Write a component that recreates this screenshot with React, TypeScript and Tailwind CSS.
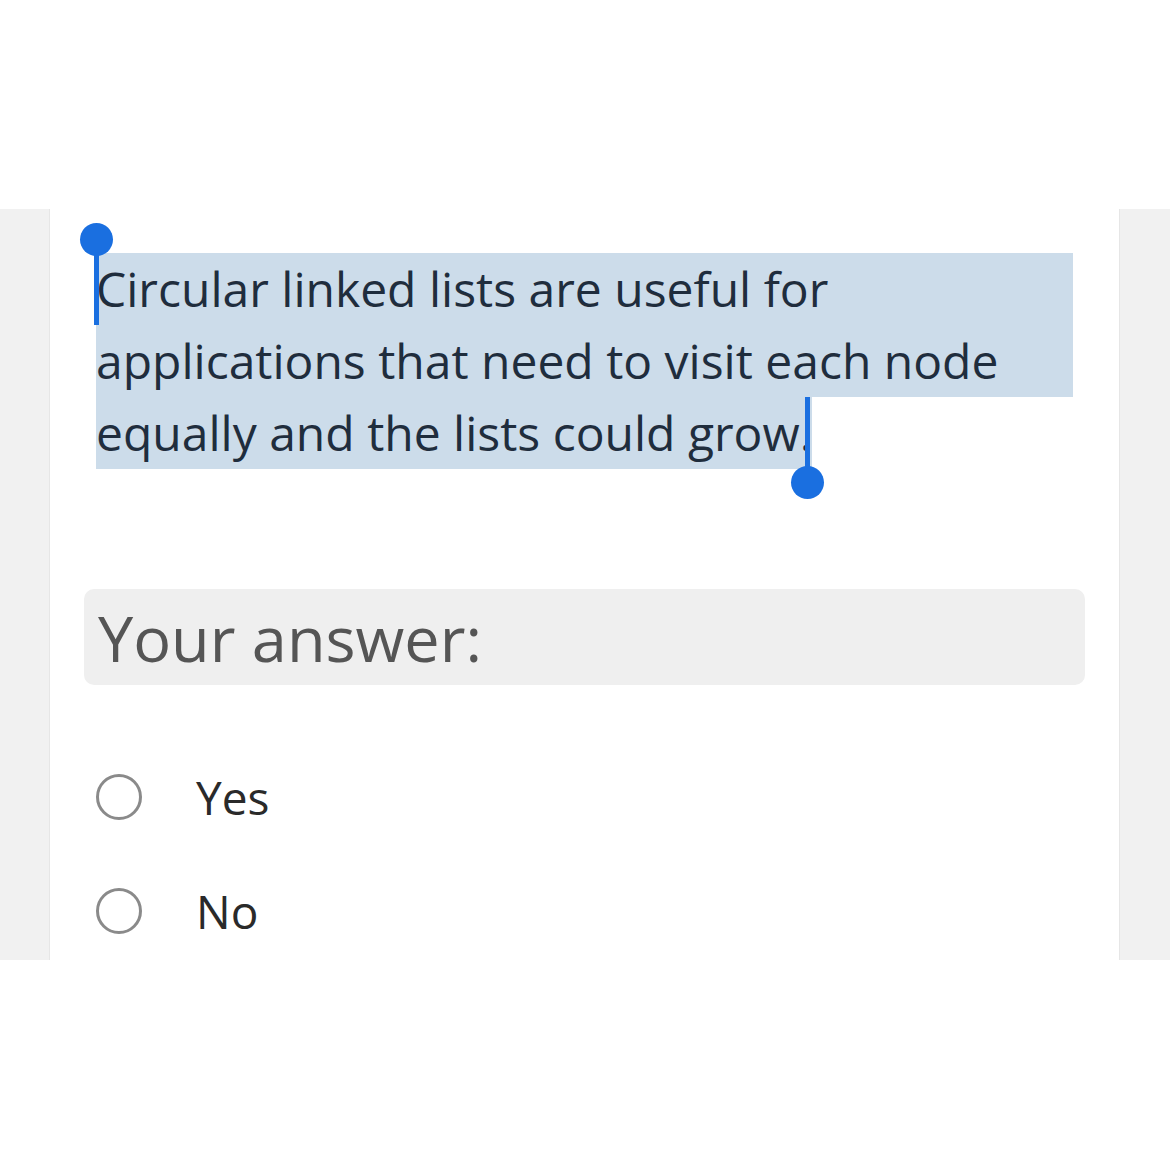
export default function App() {
  const font = { fontFamily: '"Open Sans", "Noto Sans", sans-serif' };
  return (
    <div className="w-[1170px] h-[1170px] bg-white flex flex-col" style={font}>
      <div className="h-[209px] shrink-0" />
      <div className="h-[751px] flex">
        <div className="w-[50px] bg-[#f1f1f1] border-r border-[#e6e6e6]" />
        <div className="flex-1 bg-white px-[34px] pt-[44px]">
          {/* selected question text */}
          <div className="relative ml-[12px] mr-[12px] text-[48px] leading-[72px] text-[#1f2d3d]">
            <div className="h-[72px] bg-[#ccdcea] whitespace-nowrap">Circular linked lists are useful for</div>
            <div className="h-[72px] bg-[#ccdcea] whitespace-nowrap">applications that need to visit each node</div>
            <div className="h-[72px]">
              <span className="inline-block h-[72px] bg-[#ccdcea] whitespace-nowrap">equally and the lists could grow.</span>
            </div>
            {/* selection handles */}
            <div className="absolute left-[-2px] top-[-14px] w-[5px] h-[86px] bg-[#1a6fe0]" />
            <div className="absolute left-[-16px] top-[-30px] w-[33px] h-[33px] rounded-full bg-[#1a6fe0]" />
            <div className="absolute left-[709px] top-[144px] w-[5px] h-[86px] bg-[#1a6fe0]" />
            <div className="absolute left-[695px] top-[213px] w-[33px] h-[33px] rounded-full bg-[#1a6fe0]" />
          </div>

          <div className="mt-[120px] h-[96px] rounded-[10px] bg-[#efefef] flex items-center px-[14px]">
            <span className="text-[63px] text-[#555555] leading-none">Your answer:</span>
          </div>

          <div className="mt-[90px] flex flex-col gap-[70px] pl-[12px]">
            {["Yes", "No"].map((o) => (
              <label key={o} className="flex items-center h-[44px]">
                <span className="w-[46px] h-[46px] rounded-full border-[3px] border-[#8a8a8a] shrink-0" />
                <span className="ml-[54px] text-[46px] text-[#2a2a2a] leading-none">{o}</span>
              </label>
            ))}
          </div>
        </div>
        <div className="w-[51px] bg-[#f1f1f1] border-l border-[#e6e6e6]" />
      </div>
    </div>
  );
}
